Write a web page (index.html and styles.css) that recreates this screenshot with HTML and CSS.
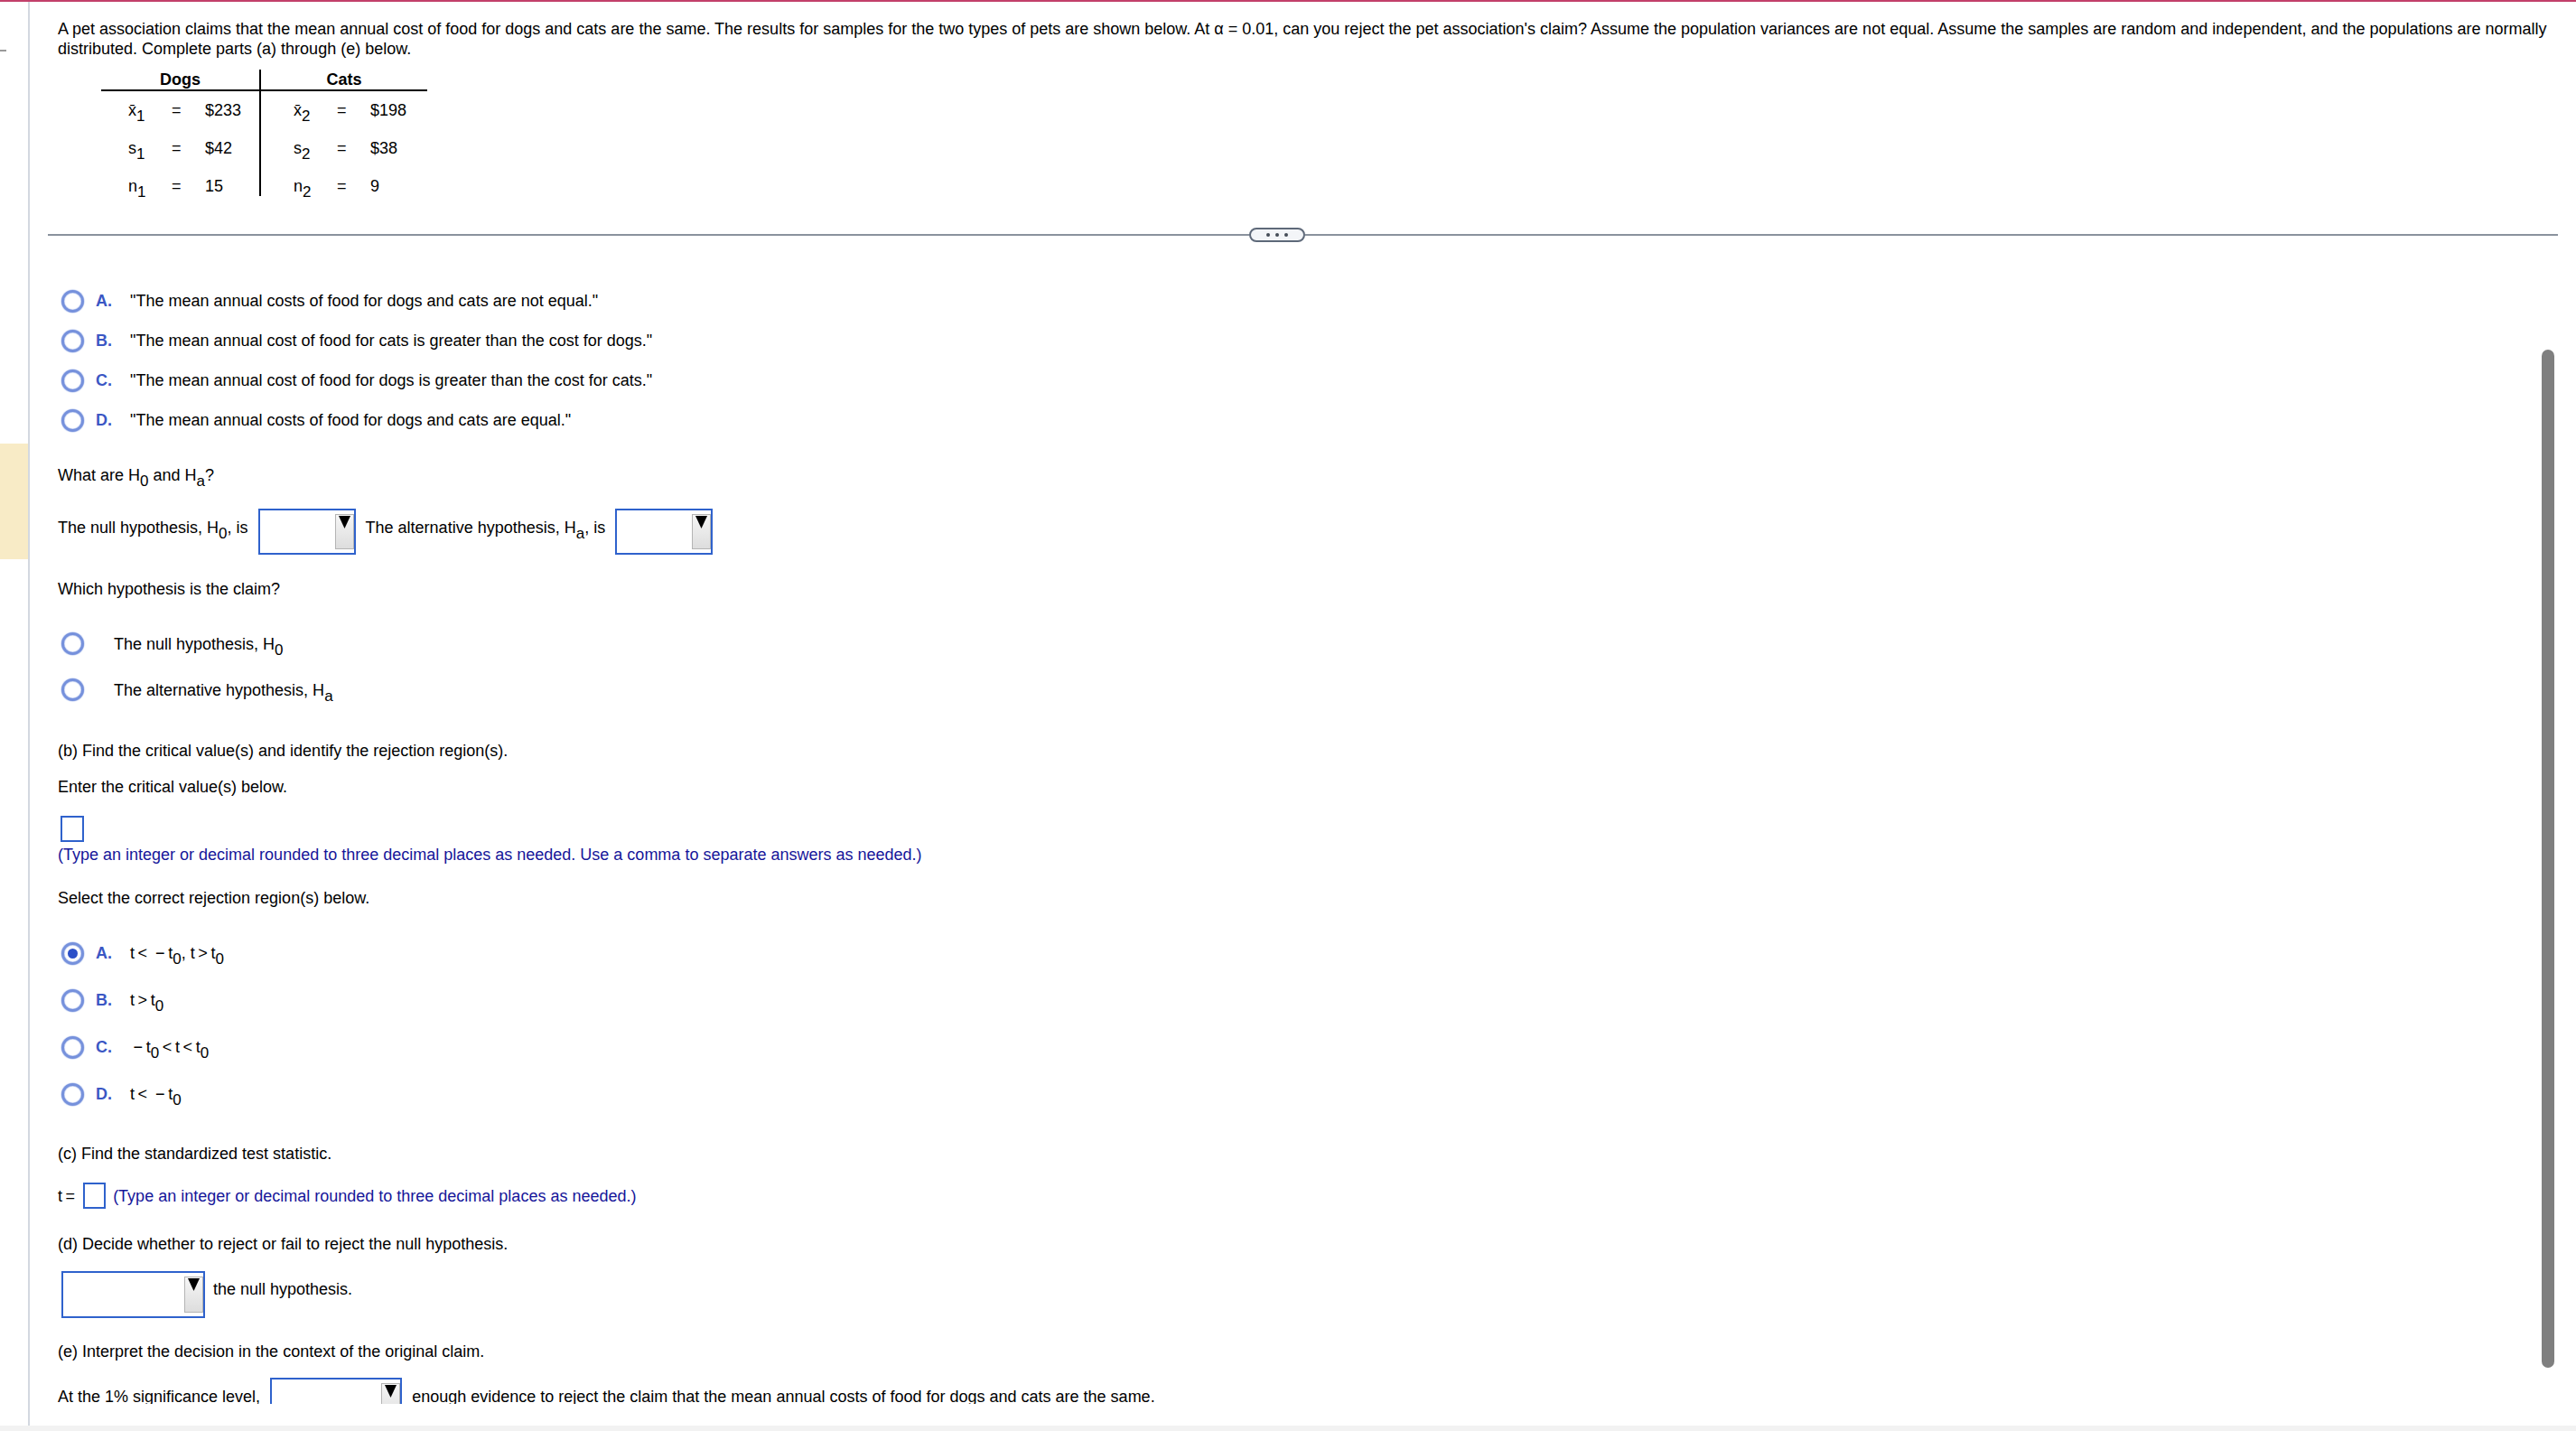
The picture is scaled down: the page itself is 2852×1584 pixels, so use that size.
FILE: index.html
```html
<!DOCTYPE html>
<html lang="en">
<head>
<meta charset="utf-8">
<title>Hypothesis test</title>
<link rel="stylesheet" href="styles.css">
</head>
<body>
<div class="topline"></div>
<div class="main">
  <aside class="gutter">
    <div class="gutter-dash"></div>
    <div class="gutter-flag"></div>
  </aside>
  <div class="pane">
    <div class="scroll">
      <p class="intro">A pet association claims that the mean annual cost of food for dogs and cats are the same. The results for samples for the two types of pets are shown below. At α = 0.01, can you reject the pet association's claim? Assume the population variances are not equal. Assume the samples are random and independent, and the populations are normally distributed. Complete parts (a) through (e) below.</p>

      <div class="data-table">
        <div class="th th-left">Dogs</div>
        <div class="th">Cats</div>
        <div class="td td-left r1"><span class="v">x̄<sub>1</sub></span><span class="eq">=</span><span>$233</span></div>
        <div class="td td-right r1"><span class="v">x̄<sub>2</sub></span><span class="eq">=</span><span>$198</span></div>
        <div class="td td-left r2"><span class="v">s<sub>1</sub></span><span class="eq">=</span><span>$42</span></div>
        <div class="td td-right r2"><span class="v">s<sub>2</sub></span><span class="eq">=</span><span>$38</span></div>
        <div class="td td-left r3"><span class="v">n<sub>1</sub></span><span class="eq">=</span><span>15</span></div>
        <div class="td td-right r3"><span class="v">n<sub>2</sub></span><span class="eq">=</span><span>9</span></div>
      </div>

      <div class="divider">
        <div class="divider-line left"></div>
        <div class="pill"><span class="dot"></span><span class="dot"></span><span class="dot"></span></div>
        <div class="divider-line right"></div>
      </div>

      <div class="choices choices-a">
        <div class="choice"><span class="radio"></span><span class="letter">A.</span><span>"The mean annual costs of food for dogs and cats are not equal."</span></div>
        <div class="choice"><span class="radio"></span><span class="letter">B.</span><span>"The mean annual cost of food for cats is greater than the cost for dogs."</span></div>
        <div class="choice"><span class="radio"></span><span class="letter">C.</span><span>"The mean annual cost of food for dogs is greater than the cost for cats."</span></div>
        <div class="choice"><span class="radio"></span><span class="letter">D.</span><span>"The mean annual costs of food for dogs and cats are equal."</span></div>
      </div>

      <p class="line q-hyp">What are H<sub>0</sub> and H<sub>a</sub>?</p>

      <div class="select-row q-null">
        <span class="select-text">The null hypothesis, H<sub>0</sub>, is</span>
        <span class="dropdown w108"><span class="dd-btn"><svg width="13" height="14" viewBox="0 0 13 14"><polygon points="0,0 13,0 6.5,14" fill="#000"/></svg></span></span>
        <span class="select-text">The alternative hypothesis, H<sub>a</sub>, is</span>
        <span class="dropdown w108"><span class="dd-btn"><svg width="13" height="14" viewBox="0 0 13 14"><polygon points="0,0 13,0 6.5,14" fill="#000"/></svg></span></span>
      </div>

      <p class="line q-which">Which hypothesis is the claim?</p>

      <div class="choices choices-claim">
        <div class="choice"><span class="radio"></span><span class="claim-text">The null hypothesis, H<sub>0</sub></span></div>
        <div class="choice"><span class="radio"></span><span class="claim-text">The alternative hypothesis, H<sub>a</sub></span></div>
      </div>

      <p class="line q-b">(b) Find the critical value(s) and identify the rejection region(s).</p>
      <p class="line q-enter">Enter the critical value(s) below.</p>
      <div class="answer-box q-box"></div>
      <p class="line hint q-hint">(Type an integer or decimal rounded to three decimal places as needed. Use a comma to separate answers as needed.)</p>

      <p class="line q-select">Select the correct rejection region(s) below.</p>
      <div class="choices choices-region">
        <div class="choice"><span class="radio checked"></span><span class="letter">A.</span><span>t&thinsp;&lt;&ensp;&minus;&thinsp;t<sub>0</sub>, t&thinsp;&gt;&thinsp;t<sub>0</sub></span></div>
        <div class="choice"><span class="radio"></span><span class="letter">B.</span><span>t&thinsp;&gt;&thinsp;t<sub>0</sub></span></div>
        <div class="choice"><span class="radio"></span><span class="letter">C.</span><span>&thinsp;&minus;&thinsp;t<sub>0</sub>&thinsp;&lt;&thinsp;t&thinsp;&lt;&thinsp;t<sub>0</sub></span></div>
        <div class="choice"><span class="radio"></span><span class="letter">D.</span><span>t&thinsp;&lt;&ensp;&minus;&thinsp;t<sub>0</sub></span></div>
      </div>

      <p class="line q-c">(c) Find the standardized test statistic.</p>
      <div class="t-row">
        <span>t&thinsp;=</span>
        <span class="answer-box"></span>
        <span class="hint">(Type an integer or decimal rounded to three decimal places as needed.)</span>
      </div>

      <p class="line q-d">(d) Decide whether to reject or fail to reject the null hypothesis.</p>
      <div class="select-row q-dsel">
        <span class="dropdown w159 tall"><span class="dd-btn"><svg width="13" height="14" viewBox="0 0 13 14"><polygon points="0,0 13,0 6.5,14" fill="#000"/></svg></span></span>
        <span class="select-text d-text">the null hypothesis.</span>
      </div>

      <p class="line q-e">(e) Interpret the decision in the context of the original claim.</p>
      <div class="select-row q-esel">
        <span class="select-text">At the 1% significance level,</span>
        <span class="dropdown w146 tall"><span class="dd-btn"><svg width="13" height="14" viewBox="0 0 13 14"><polygon points="0,0 13,0 6.5,14" fill="#000"/></svg></span></span>
        <span class="select-text">enough evidence to reject the claim that the mean annual costs of food for dogs and cats are the same.</span>
      </div>
    </div>
  </div>
  <div class="thumb"></div>
</div>
<div class="footer"></div>
</body>
</html>
```

FILE: styles.css
```css
* { box-sizing: border-box; }

html, body {
  margin: 0;
  padding: 0;
  height: 1584px;
  overflow: hidden;
  background: #ffffff;
}

body {
  font-family: "Liberation Sans", Arial, Helvetica, sans-serif;
  font-size: 18px;
  line-height: 22px;
  color: #000;
}

p { margin: 0; }

sub {
  font-size: 17px;
  vertical-align: -6px;
  line-height: 0;
}

.topline {
  height: 2px;
  background: #c2406a;
}

.main {
  position: relative;
  display: flex;
  height: 1576px;
}

.gutter {
  width: 33px;
  flex: none;
  border-right: 2px solid #d3d8e0;
  display: flex;
  flex-direction: column;
}

.gutter-dash {
  width: 7px;
  height: 2px;
  margin-top: 53px;
  background: #9a9a9a;
}

.gutter-flag {
  height: 128px;
  margin-top: 434px;
  background: #f8ebc6;
}

.pane {
  flex: 1;
  min-width: 0;
}

.scroll {
  height: 1552px;
  overflow: hidden;
  padding: 19px 20px 0 31px;
}

/* table */
.data-table {
  display: grid;
  grid-template-columns: 177px 184px;
  margin: 12px 0 0 48px;
  width: 361px;
}

.th {
  font-weight: bold;
  text-align: center;
  height: 24px;
  border-bottom: 2px solid #000;
}

.th-left, .td-left { border-right: 2px solid #000; }

.td {
  display: flex;
  padding-top: 10px;
  height: 42px;
}

.td.r3 { height: 32px; }

.td-left { padding-left: 30px; }
.td-right { padding-left: 36px; }

.td .v { width: 48px; }
.td .eq { width: 37px; }

/* divider */
.divider {
  display: flex;
  align-items: center;
  height: 16px;
  margin: 35px 0 0 -11px;
}

.divider-line {
  height: 2px;
  background: #8a929d;
  flex-basis: 0;
}

.divider-line.left { flex-grow: 1330; }
.divider-line.right { flex-grow: 1387; }

.pill {
  width: 62px;
  height: 16px;
  border: 2px solid #5e6979;
  border-radius: 8px;
  background: #f3f5f8;
  display: flex;
  align-items: center;
  justify-content: center;
  gap: 6px;
}

.dot {
  width: 4px;
  height: 4px;
  border-radius: 50%;
  background: #454c57;
}

/* choices */
.choice {
  display: flex;
  align-items: center;
}

.choices-a { margin-top: 43px; }
.choices-a .choice { height: 44px; }

.choices-claim { margin-top: 24px; }
.choices-claim .choice { height: 51px; }

.choices-region { margin-top: 24px; }
.choices-region .choice { height: 52px; }

.radio {
  width: 25px;
  height: 25px;
  margin-left: 4px;
  border-radius: 50%;
  border: 3px solid #7691dc;
  box-shadow: 0 0 1px 0.5px #b8c7ef, inset 0 0 1px 0.5px #b8c7ef;
  background: #fff;
  flex: none;
  display: flex;
  align-items: center;
  justify-content: center;
}

.radio.checked::after {
  content: "";
  width: 11px;
  height: 11px;
  border-radius: 50%;
  background: #2c50c8;
}

.letter {
  width: 38px;
  margin-left: 13px;
  font-weight: bold;
  color: #3b57c4;
}

.claim-text { margin-left: 33px; }

/* lines */
.q-hyp { margin-top: 28px; }
.q-which { margin-top: 27px; }
.q-b { margin-top: 31px; }
.q-enter { margin-top: 18px; }
.q-hint { margin-top: 3px; }
.q-select { margin-top: 26px; }
.q-c { margin-top: 29px; }
.q-d { margin-top: 28px; }
.q-e { margin-top: 26px; }

.hint { color: #16169a; }

/* answer boxes */
.answer-box {
  display: block;
  width: 26px;
  height: 29px;
  border: 2px solid #2f62cc;
  background: #fff;
}

.q-box {
  margin: 21px 0 0 3px;
}

.t-row {
  display: flex;
  align-items: center;
  margin-top: 21px;
  height: 29px;
}

.t-row .answer-box { margin: 0 8px 0 9px; width: 25px; }

/* dropdown selects */
.select-row {
  display: flex;
  align-items: flex-start;
}

.q-null { margin-top: 26px; }
.q-dsel { margin-top: 19px; }
.q-esel { margin-top: 18px; }

.select-text {
  margin-top: 10px;
  white-space: nowrap;
}

.d-text { margin-top: 9px; }

.dropdown {
  display: flex;
  flex: none;
  height: 51px;
  border: 2px solid #2f62cc;
  background: #fff;
  padding: 4px 0;
  margin: 0 11px;
  justify-content: flex-end;
}

.dropdown.tall { height: 52px; }

.q-dsel .dropdown { margin-left: 4px; margin-right: 9px; }

.w108 { width: 108px; }
.w159 { width: 159px; }
.w146 { width: 146px; }

.dd-btn {
  width: 21px;
  border: 1px solid #b4b4b4;
  background: linear-gradient(#f6f6f6, #dddddd);
  display: flex;
  justify-content: center;
  align-items: flex-start;
  padding-top: 1px;
}

.dd-btn svg { display: block; }

/* overlay scrollbar */
.thumb {
  position: absolute;
  right: 24px;
  top: 385px;
  width: 14px;
  height: 1127px;
  border-radius: 7px;
  background: #7f7f7f;
}

.footer {
  height: 6px;
  background: #f2f2f2;
}
```
